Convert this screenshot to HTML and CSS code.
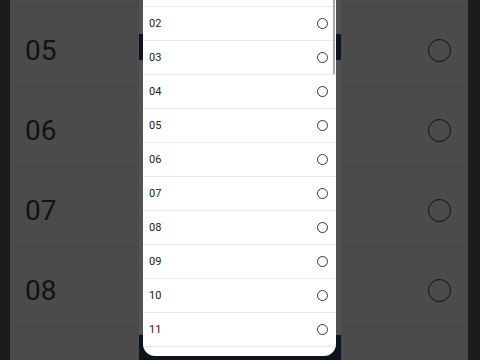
FILE: index.html
```html
<!DOCTYPE html>
<html>
<head>
<meta charset="utf-8">
<link rel="stylesheet" href="styles.css">
</head>
<body>
<div class="screen">
  <div class="edge"></div>
  <div class="panel">
    <div class="bg-list">
      <div class="bg-row"></div>
      <div class="bg-row"><span>05</span><i class="bg-radio"></i></div>
      <div class="bg-row"><span>06</span><i class="bg-radio"></i></div>
      <div class="bg-row"><span>07</span><i class="bg-radio"></i></div>
      <div class="bg-row"><span>08</span><i class="bg-radio"></i></div>
    </div>
    <div class="behind">
      <div class="navy navy-top"></div>
      <div class="navy navy-bottom"></div>
    </div>
    <div class="modal">
      <div class="m-row"></div>
      <div class="m-row"><span>02</span><i class="radio"></i></div>
      <div class="m-row"><span>03</span><i class="radio"></i></div>
      <div class="m-row"><span>04</span><i class="radio"></i></div>
      <div class="m-row"><span>05</span><i class="radio"></i></div>
      <div class="m-row"><span>06</span><i class="radio"></i></div>
      <div class="m-row"><span>07</span><i class="radio"></i></div>
      <div class="m-row"><span>08</span><i class="radio"></i></div>
      <div class="m-row"><span>09</span><i class="radio"></i></div>
      <div class="m-row"><span>10</span><i class="radio"></i></div>
      <div class="m-row"><span>11</span><i class="radio"></i></div>
      <div class="m-row m-row-last"></div>
      <div class="scrollbar"></div>
    </div>
  </div>
  <div class="edge"></div>
</div>
</body>
</html>
```

FILE: styles.css
```css
html, body {
  margin: 0;
  padding: 0;
}
body {
  background: #1c1c1c;
  font-family: Roboto, "Liberation Sans", sans-serif;
  width: 480px;
  height: 360px;
  overflow: hidden;
}
.screen {
  display: flex;
  width: 480px;
  height: 360px;
}
.edge {
  width: 10px;
  flex: 0 0 auto;
  background: #1c1c1c;
}
.edge:last-child {
  width: 12px;
}
.panel {
  flex: 1 1 auto;
  position: relative;
  background: #4b4b4b;
  overflow: hidden;
}
.bg-list {
  display: flex;
  flex-direction: column;
  margin-top: -72px;
}
.bg-row {
  box-sizing: border-box;
  height: 80px;
  border-bottom: 1px solid #454545;
  display: flex;
  align-items: center;
  justify-content: space-between;
  padding: 6px 17px 0 15px;
  font-size: 28px;
  color: #121212;
}
.bg-radio {
  box-sizing: border-box;
  width: 23px;
  height: 23px;
  border: 1.8px solid #121212;
  border-radius: 50%;
}
.behind {
  position: absolute;
  left: 129px;
  width: 202px;
  top: 0;
  bottom: 0;
  background: #525252;
}
.navy {
  position: absolute;
  left: 0;
  right: 0;
  background: #0c1420;
}
.navy-top {
  top: 34px;
  height: 26px;
}
.navy-bottom {
  top: 335px;
  height: 30px;
}
.modal {
  position: absolute;
  left: 133px;
  top: -27px;
  width: 193px;
  height: 383px;
  background: #ffffff;
  border-radius: 0 0 12px 12px;
  overflow: hidden;
  display: flex;
  flex-direction: column;
}
.m-row {
  box-sizing: border-box;
  flex: 0 0 34px;
  height: 34px;
  border-bottom: 1px solid #e8e8e8;
  display: flex;
  align-items: center;
  justify-content: space-between;
  padding: 0 8px 0 6px;
  font-size: 11px;
  color: #222222;
}
.m-row-last {
  border-bottom: none;
}
.radio {
  box-sizing: border-box;
  width: 11px;
  height: 11px;
  border: 1px solid #333333;
  border-radius: 50%;
}
.scrollbar {
  position: absolute;
  right: 1px;
  top: 27px;
  width: 2px;
  height: 74px;
  background: #a8a8a8;
}
```
